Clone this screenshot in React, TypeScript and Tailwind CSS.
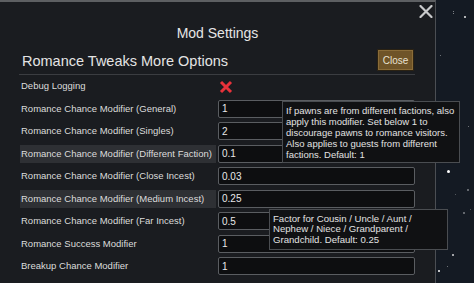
import React from "react";

const rows: { label: string; value?: string; hl?: boolean }[] = [
  { label: "Debug Logging" },
  { label: "Romance Chance Modifier (General)", value: "1" },
  { label: "Romance Chance Modifier (Singles)", value: "2" },
  { label: "Romance Chance Modifier (Different Faction)", value: "0.1", hl: true },
  { label: "Romance Chance Modifier (Close Incest)", value: "0.03" },
  { label: "Romance Chance Modifier (Medium Incest)", value: "0.25", hl: true },
  { label: "Romance Chance Modifier (Far Incest)", value: "0.5" },
  { label: "Romance Success Modifier", value: "1" },
  { label: "Breakup Chance Modifier", value: "1" },
];

const stars: { x: number; y: number; s: number; o: number }[] = [
  { x: 453, y: 11, s: 1, o: 0.6 },
  { x: 453, y: 13, s: 1, o: 0.6 },
  { x: 464, y: 16, s: 2, o: 0.9 },
  { x: 440, y: 55, s: 1, o: 0.5 },
  { x: 468, y: 126, s: 1, o: 0.5 },
  { x: 447, y: 170, s: 2.5, o: 1 },
  { x: 455, y: 194, s: 1, o: 0.35 },
  { x: 467, y: 189, s: 1.5, o: 0.45 },
  { x: 463, y: 212, s: 1.5, o: 0.45 },
  { x: 470, y: 209, s: 1, o: 0.35 },
  { x: 452, y: 254, s: 1.5, o: 0.8 },
  { x: 438, y: 270, s: 2, o: 1 },
  { x: 447, y: 266, s: 1, o: 0.5 },
];

export default function App() {
  return (
    <div
      className="relative flex h-[283px] w-[474px] overflow-hidden bg-[#141a23]"
      style={{ fontFamily: '"Liberation Sans", Arial, sans-serif' }}
    >
      {stars.map((st, i) => (
        <div
          key={i}
          className="absolute rounded-full bg-white"
          style={{ left: st.x, top: st.y, width: st.s, height: st.s, opacity: st.o }}
        />
      ))}

      <div className="relative flex h-full w-[436px] flex-col border-r border-t-2 border-r-[#4b4e53] border-t-[#5d5f62] bg-[#1a1c20] pl-[20px] pr-[20px]">
        {/* close X */}
        <svg
          className="absolute right-[2px] top-[3px]"
          width="14"
          height="13"
          viewBox="0 0 14 13"
        >
          <path d="M1.5 1 L12.5 12 M12.5 1 L1.5 12" stroke="#c9cacc" strokeWidth="2.2" strokeLinecap="round" />
        </svg>

        <div className="mt-[23px] h-[16px] text-center text-[14px] leading-[16px] text-[#e6e6e6]">
          Mod Settings
        </div>

        <div className="mt-[8px] flex h-[22px] items-center justify-between">
          <div className="pl-[2px] pt-[2px] text-[14.5px] leading-[18px] text-[#e4e4e4]">
            Romance Tweaks More Options
          </div>
          <button className="mr-[1px] flex h-[22px] w-[37px] items-center justify-center rounded-[1px] border border-[#2b2213] bg-[#6f5428] text-[10px] text-[#e9e2d2] shadow-[inset_0_0_0_1px_#8a6c38]">
            Close
          </button>
        </div>

        <div className="mt-[3px] h-px w-[396px] -ml-[1px] bg-[#3b3d41]" />

        <div className="flex flex-col">
          {rows.map((r, i) => (
            <div key={i} className="flex h-[22.5px] items-center">
              <div className="flex w-[198px] items-center">
                <div
                  className={
                    r.hl
                      ? "flex h-[18px] w-[196px] items-center bg-[#2e3034] pl-[1px] text-[9.5px] text-[#dcdcdc]"
                      : "flex h-[18px] w-[196px] items-center pl-[1px] text-[9.5px] text-[#dcdcdc]"
                  }
                >
                  {r.label}
                </div>
              </div>
              {r.value === undefined ? (
                <svg width="14" height="14" viewBox="0 0 14 14" className="ml-[1px] mt-[1px]">
                  <path d="M2 2 L12 12 M12 2 L2 12" stroke="#e8323a" strokeWidth="3" strokeLinecap="butt" />
                </svg>
              ) : (
                <div className="flex h-[18px] w-[197px] items-center rounded-[2px] border border-[#5a5d61] bg-[#0d0e10] pl-[3px] text-[10px] text-[#e8e8e8]">
                  {r.value}
                </div>
              )}
            </div>
          ))}
        </div>
      </div>

      {/* tooltips */}
      <div className="absolute left-[282px] top-[101px] h-[62px] w-[178px] border border-[#4a4d51] bg-[#101113] pl-[3px] pt-[3px] text-[9.5px] leading-[11px] text-[#e2e2e2]">
        If pawns are from different factions, also
        <br />
        apply this modifier. Set below 1 to
        <br />
        discourage pawns to romance visitors.
        <br />
        Also applies to guests from different
        <br />
        factions. Default: 1
      </div>

      <div className="absolute left-[269px] top-[209px] h-[41px] w-[179px] border border-[#4a4d51] bg-[#101113] pl-[3px] pt-[3.5px] text-[9.6px] leading-[10.5px] text-[#e2e2e2]">
        Factor for Cousin / Uncle / Aunt /
        <br />
        Nephew / Niece / Grandparent /
        <br />
        Grandchild. Default: 0.25
      </div>
    </div>
  );
}
